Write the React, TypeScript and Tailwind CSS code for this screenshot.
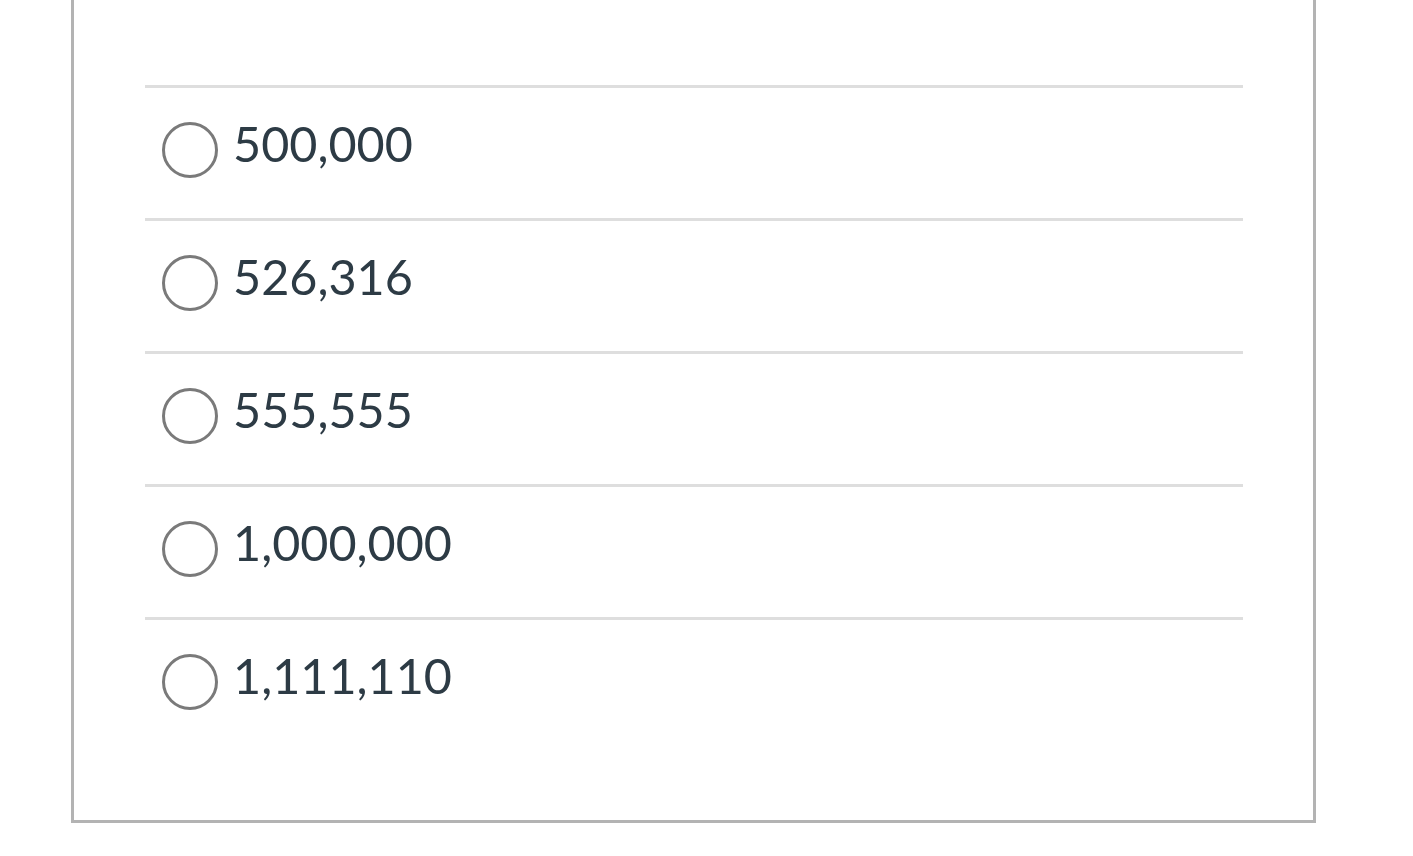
const answers = ["500,000", "526,316", "555,555", "1,000,000", "1,111,110"];

export default function App() {
  return (
    <div className="min-h-screen bg-white" style={{ fontFamily: "Lato, 'Noto Sans', sans-serif" }}>
      <div className="ml-[71px] w-[1245px] border-x-[3px] border-b-[3px] border-t-0 border-[#b3b3b3] pt-[85px] pb-[70px] pl-[71px] pr-[70px]">
        {answers.map((a) => (
          <label
            key={a}
            className="flex h-[133px] items-start border-t-[3px] border-[#dedede] pt-[26px] cursor-pointer"
          >
            <span className="ml-[17px] mt-[8px] h-[56px] w-[56px] shrink-0 rounded-full border-[3px] border-[#7a7a7a]" />
            <span className="ml-[15px] text-[48.5px] leading-[1.2] text-[#2d3b45]">{a}</span>
          </label>
        ))}
      </div>
    </div>
  );
}
